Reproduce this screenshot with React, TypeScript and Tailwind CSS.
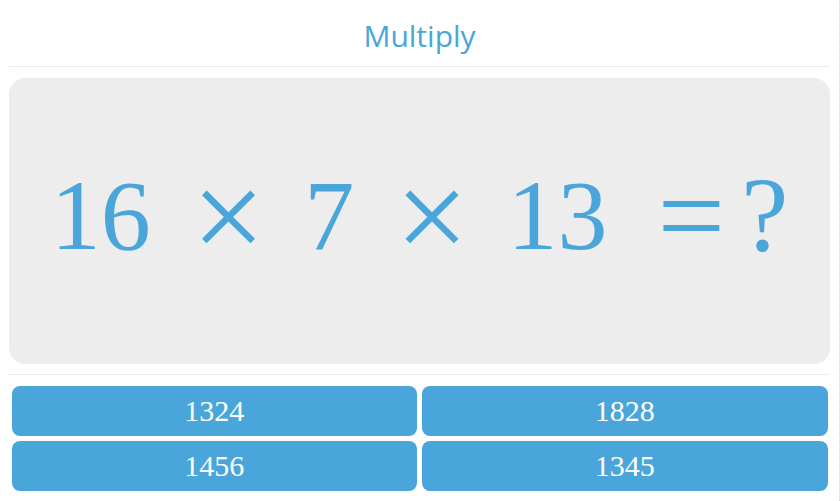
import React from 'react'

const answers = ['1324', '1828', '1456', '1345']

function Expression() {
  return (
    <div className="flex items-center justify-center leading-none text-[#4aa6da] [font-family:'Liberation_Serif',serif]">
      <span className="text-[100px]">16</span>
      <span className="ml-[41px] text-[130px]">×</span>
      <span className="ml-[39px] text-[100px]">7</span>
      <span className="ml-[41px] text-[130px]">×</span>
      <span className="ml-[39px] text-[100px]">13</span>
      <span className="ml-[50px] text-[120px]">=</span>
      <span className="ml-[16px] text-[106px]">?</span>
    </div>
  )
}

export default function App() {
  return (
    <div className="h-[501px] w-[840px] border-r border-dotted border-[#cfcfcf] bg-white px-[9px]">
      <header className="flex h-[67px] items-center justify-center border-b border-[#ebebeb] pt-[4px]">
        <h1 className="text-[30px] text-[#4aa6da] [font-family:'Open_Sans',sans-serif]">
          Multiply
        </h1>
      </header>

      <div className="mt-[11px] flex h-[286px] items-center justify-center rounded-[16px] bg-[#ededed] pb-[11px]">
        <Expression />
      </div>

      <div className="mt-[10px] border-t border-[#ebebeb] pt-[8px]">
        <div className="grid grid-cols-2">
          {answers.map((a) => (
            <button
              key={a}
              className="m-[2.5px] flex h-[50px] items-center justify-center rounded-[8px] bg-[#4aa6da] text-[30px] text-white [font-family:'Liberation_Serif',serif]"
            >
              {a}
            </button>
          ))}
        </div>
      </div>
    </div>
  )
}
